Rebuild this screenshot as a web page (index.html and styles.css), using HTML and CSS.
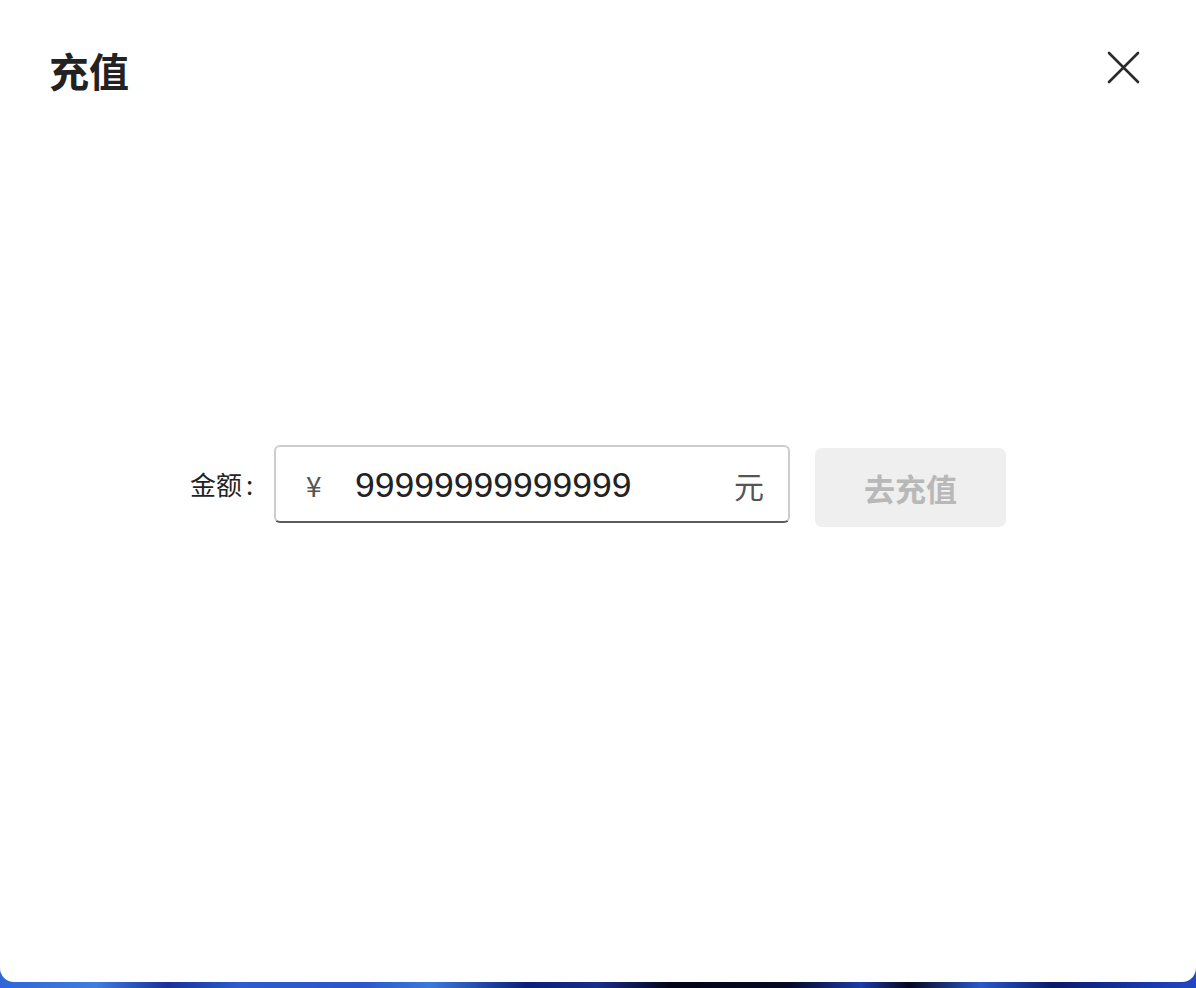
FILE: index.html
```html
<!DOCTYPE html>
<html lang="zh-CN">
<head>
    <meta charset="UTF-8">
    <meta name="viewport" content="width=device-width, initial-scale=1.0">
    <title>充值</title>
    <link rel="stylesheet" href="styles.css">
</head>
<body>
    <div class="dialog">
        <div class="dialog_head">
            <h1 class="title">充值</h1>
            <button class="close_btn" aria-label="关闭">
                <svg width="34" height="34" viewBox="0 0 34 34">
                    <path d="M3 2 L32 31 M32 2 L3 31" stroke="#2a2a2a" stroke-width="2.6" stroke-linecap="round" fill="none"/>
                </svg>
            </button>
        </div>
        <div class="dialog_body">
            <div class="pay_row">
                <label class="label" for="amount">金额<span class="colon">:</span></label>
                <div class="amount_box">
                    <span class="yen">¥</span>
                    <input id="amount" class="amount" type="text" value="99999999999999">
                    <span class="unit">元</span>
                </div>
                <button class="pay_btn" disabled>去充值</button>
            </div>
        </div>
    </div>
</body>
</html>
```

FILE: styles.css
```css
* {
    box-sizing: border-box;
}
body {
    margin: 0;
    height: 988px;
    overflow: hidden;
    font-family: "Noto Sans CJK SC", "Noto Sans", sans-serif;
    background: linear-gradient(90deg,
        #2e66d8 0%, #3f7de0 8%, #1a2f9a 14%, #2c5cd0 20%, #2a55cc 30%,
        #3b78dc 36%, #0d1f7a 44%, #1a2c8c 50%, #030518 56%, #040a26 66%,
        #1d3aa8 72%, #05081e 76%, #2a58cc 82%, #0b1a6a 88%, #1a38b0 96%, #2148c0 100%);
}
.dialog {
    height: 982px;
    background-color: #fff;
    border-radius: 0 0 14px 14px;
    display: flex;
    flex-direction: column;
}
.dialog_head {
    height: 140px;
    padding: 0 56px 0 49px;
    display: flex;
    align-items: center;
    justify-content: space-between;
}
.title {
    margin: 0;
    font-size: 40px;
    font-weight: 700;
    color: #222;
}
.close_btn {
    border: none;
    background: none;
    padding: 0;
    width: 34px;
    height: 34px;
    margin-bottom: 4px;
    cursor: pointer;
}
.dialog_body {
    padding-top: 305px;
    display: flex;
    justify-content: center;
}
.pay_row {
    display: flex;
    align-items: flex-start;
}
.label {
    width: 68px;
    font-size: 26px;
    line-height: 78px;
    color: #222;
    margin-right: 16px;
    white-space: nowrap;
}
.colon {
    margin-left: 4px;
}
.amount_box {
    width: 516px;
    height: 78px;
    border: 2px solid #cdcdcd;
    border-bottom-color: #5c5c5c;
    border-radius: 6px;
    display: flex;
    align-items: center;
    padding: 2px 24px 0 30px;
}
.yen {
    font-size: 28px;
    color: #555;
    width: 49px;
}
.amount {
    flex: 1;
    min-width: 0;
    border: none;
    outline: none;
    padding: 0;
    font-family: "Liberation Sans", Arial, sans-serif;
    font-size: 35.5px;
    color: #222;
    background: transparent;
}
.unit {
    font-size: 30px;
    color: #555;
}
.pay_btn {
    margin-left: 25px;
    margin-top: 3px;
    width: 191px;
    height: 79px;
    border: none;
    border-radius: 7px;
    background-color: #efefef;
    color: #b8b8b8;
    font-family: "Noto Sans CJK SC", sans-serif;
    font-size: 31px;
    font-weight: 700;
}
```
